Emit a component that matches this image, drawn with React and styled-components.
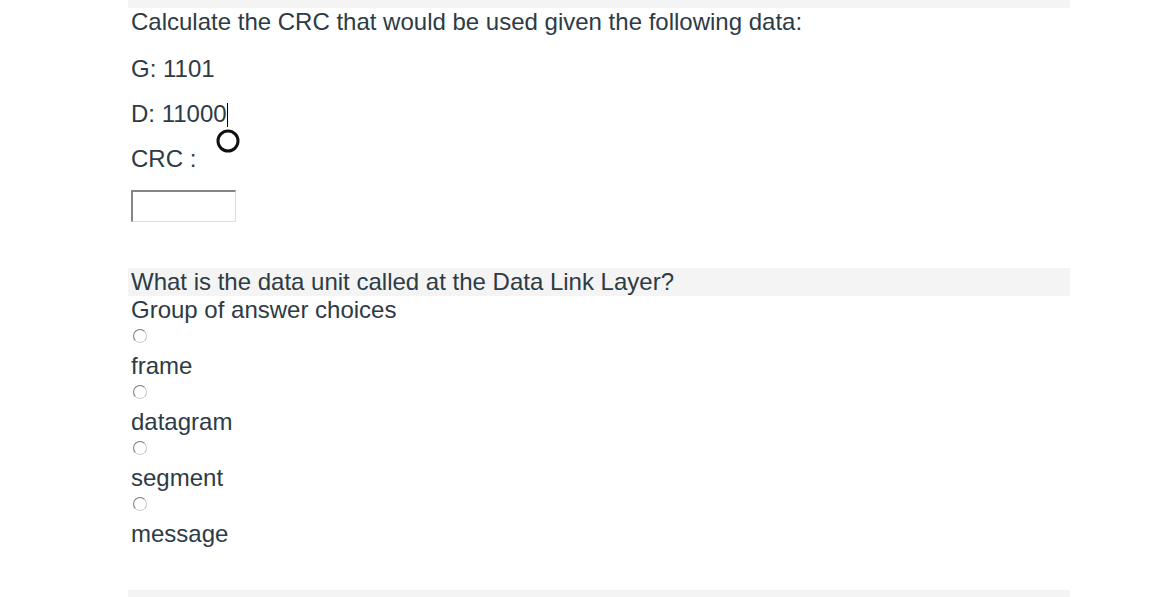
import React from "react";
import styled, { createGlobalStyle } from "styled-components";

const GlobalStyle = createGlobalStyle`
    body {
        margin: 0;
        background: #fff;
        font-family: "Liberation Sans", Arial, sans-serif;
        color: #2d3b45;
    }
`;

const Page = styled.div`
    width: 942px;
    margin-left: 128px;
    position: relative;
`;

const Bar = styled.div`
    height: ${(p) => p.h}px;
    background: #f4f4f4;
`;

const Spacer = styled.div`
    height: ${(p) => p.h}px;
`;

const Question = styled.div`
    padding: 0;
`;

const Line = styled.p`
    margin: 0 0 ${(p) => p.gap ?? 17}px;
    padding-left: 3px;
    font-size: 24px;
    line-height: 28px;
    position: relative;
`;

const Caret = styled.span`
    display: inline-block;
    width: 1px;
    height: 24px;
    background: #000;
    vertical-align: -5px;
`;

const TextInput = styled.input`
    display: block;
    box-sizing: border-box;
    margin-left: 3px;
    width: 105px;
    height: 32px;
    border-top: 2px solid #858585;
    border-left: 2px solid #858585;
    border-right: 1px solid #dcdcdc;
    border-bottom: 1px solid #dcdcdc;
    background: #fff;
    outline: none;
`;

const Header = styled.div`
    background: #f4f4f4;
    padding-left: 3px;
    font-size: 24px;
    line-height: 28px;
`;

const Sub = styled.div`
    padding-left: 3px;
    font-size: 24px;
    line-height: 28px;
`;

const Choice = styled.div`
    padding-left: 3px;
`;

const Radio = styled.span`
    display: block;
    box-sizing: border-box;
    width: 14px;
    height: 14px;
    margin: 5px 0 9px 2px;
    border-radius: 50%;
    border: 1px solid #7a7a7a;
    border-bottom-color: #d0d0d0;
    border-right-color: #c4c4c4;
    background: #fff;
`;

const Label = styled.div`
    font-size: 24px;
    line-height: 28px;
`;

const Pointer = styled.svg`
    position: absolute;
    left: 88px;
    top: 128px;
`;

const choices = ["frame", "datagram", "segment", "message"];

export default function App() {
    return (
        <>
            <GlobalStyle />
            <Page>
                <Bar h={8} />
                <Question>
                    <Line gap={19}>Calculate the CRC that would be used given the following data:</Line>
                    <Line>G: 1101</Line>
                    <Line>
                        D: 11000
                        <Caret />
                    </Line>
                    <Line>CRC :</Line>
                    <TextInput type="text" />
                </Question>
                <Pointer width="26" height="26" viewBox="0 0 26 26">
                    <circle cx="12" cy="13" r="10" fill="none" stroke="#111" strokeWidth="3" />
                </Pointer>
                <Spacer h={46} />
                <Header>What is the data unit called at the Data Link Layer?</Header>
                <Sub>Group of answer choices</Sub>
                {choices.map((c) => (
                    <Choice key={c}>
                        <Radio />
                        <Label>{c}</Label>
                    </Choice>
                ))}
                <Spacer h={42} />
                <Bar h={7} />
            </Page>
        </>
    );
}
